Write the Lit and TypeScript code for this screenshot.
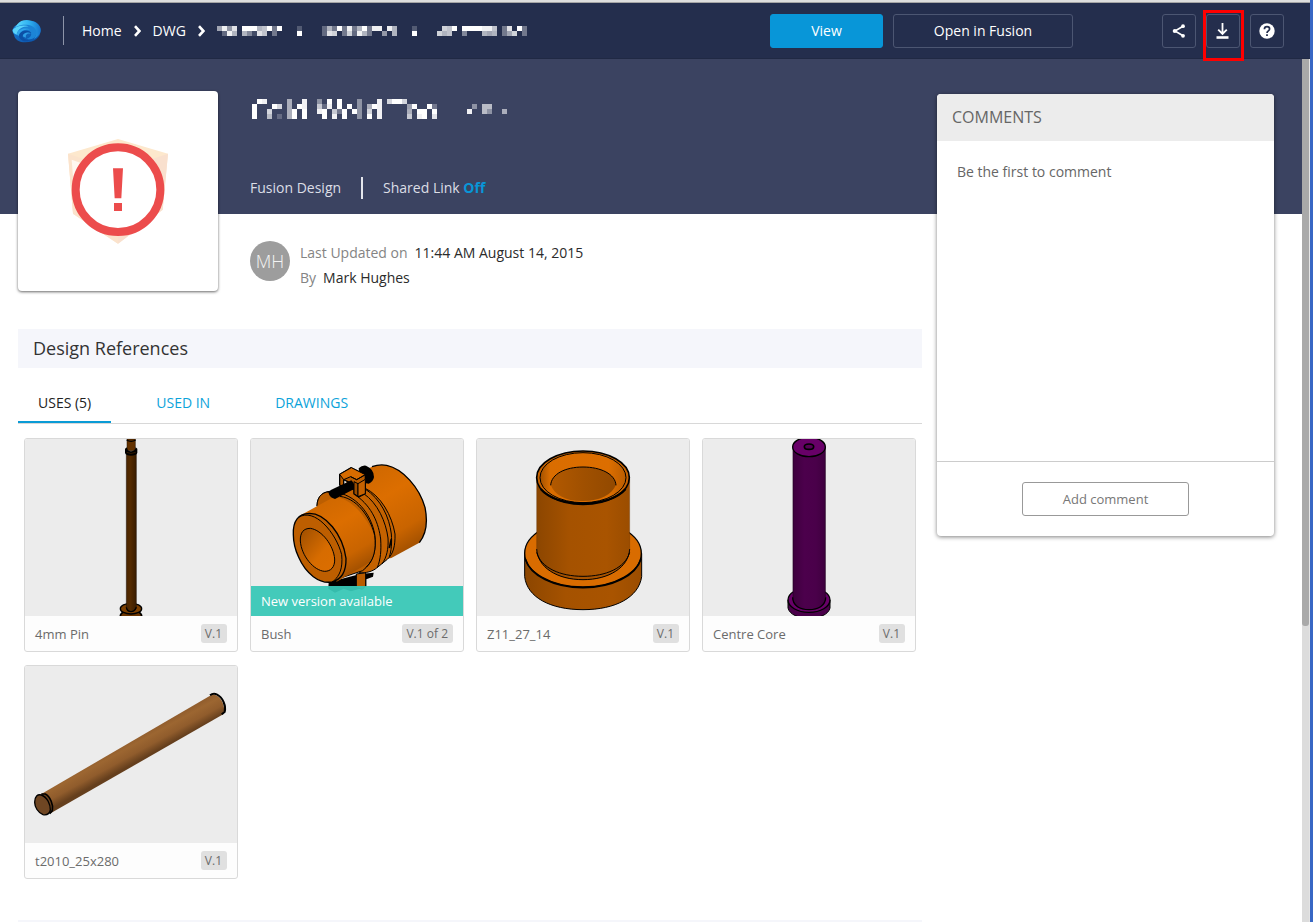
import { LitElement, html, svg, css } from "lit";
import { customElement, property, state } from "lit/decorators.js";

// Grey level per 5px cell, one hex digit each; a dot leaves the cell empty.
const CRUMB_CELLS = [
  "9e8d.fffabf6f...4....5a6f6e6af6ee.ea...4.....cbf.ffffeeb.6d.f6",
  ".5ea.a73db.6....f....5dc.6c5ea6..8.a...f....cab..7...a9a.69c.6",
];
const TITLE_CELLS = [
  ".fe....9..e..7.f.f...7...e.cffc",
  "f...fc.9.fe..b4e.f.f.7.9fe.....8f..f5.......7.aa",
  "f..c...9f.f..ef.b5f.f7.c.e.....9.ff.f......e..a7..9",
  "f..a.4.9f.f...f.e.f..7.f.e.....b.ef.d",
];

@customElement("masked-name")
export class MaskedName extends LitElement {
  @property({ attribute: false }) rows: string[] = [];

  static styles = css`
    :host { display: block; }
    svg { display: block; }
  `;

  render() {
    const cols = Math.max(0, ...this.rows.map((r) => r.length));
    const w = cols * 5;
    const h = this.rows.length * 5;
    return html`<svg width=${w} height=${h} viewBox="0 0 ${w} ${h}" shape-rendering="crispEdges" aria-hidden="true">
      ${this.rows.map((row, y) =>
        [...row].map((c, x) =>
          c === "." ? null : svg`<rect x=${x * 5} y=${y * 5} width="5" height="5" fill="#fff" fill-opacity=${(parseInt(c, 16) - 1) / 14}></rect>`
        )
      )}
    </svg>`;
  }
}

const pinArt = svg`<svg viewBox="15 27 636 531" aria-hidden="true">
  <defs><linearGradient id="pin"><stop offset="0" stop-color="#4a2500"/><stop offset=".4" stop-color="#552b00"/><stop offset="1" stop-color="#3a1d00"/></linearGradient></defs>
  <ellipse cx="333" cy="558" rx="32" ry="17" fill="#6b3500" stroke="#000" stroke-width="5"/>
  <ellipse cx="333" cy="536" rx="32" ry="16" fill="#7c3f00" stroke="#000" stroke-width="4"/>
  <path d="M319 68h30v466q-3 11-16 11t-14-11z" fill="url(#pin)" stroke="#1a0c00" stroke-width="1.5"/>
  <path d="M319 532q3 13 14 13t16-13" fill="none" stroke="#000" stroke-width="4"/>
  <path d="M321 27h25v35h-25z" fill="#643200" stroke="#201000" stroke-width="1.5"/>
  <path d="M320 30q13 8 27 0" fill="none" stroke="#000" stroke-width="4"/>
  <path d="M315 56l6-4q0 12 12 12t14-12l5 4v13q-4 8-19 8t-18-8z"/>
  <path d="M320 67q12 7 27 0" fill="none" stroke="#4a2500" stroke-width="2"/>
</svg>`;

const bushArt = svg`<svg viewBox="15 15 636 531" aria-hidden="true">
  <defs>
    <linearGradient id="b1" x1="0" y1="0" x2=".5" y2="1"><stop offset="0" stop-color="#c96500"/><stop offset=".45" stop-color="#dc6e00"/><stop offset=".8" stop-color="#c96400"/><stop offset="1" stop-color="#a25000"/></linearGradient>
    <linearGradient id="b2" x1="0" y1="0" x2="1" y2="1"><stop offset="0" stop-color="#9d4e00"/><stop offset=".6" stop-color="#d76c00"/><stop offset="1" stop-color="#dc6e00"/></linearGradient>
  </defs>
  <path d="M248 445l95-25 40-4-2 12-20 8v22l-46 14-22-8-26 12-20-12z"/>
  <path d="M331 420l28-4v40l-10 10-18-5z" fill="#b95c00" stroke="#000" stroke-width="3"/>
  <path d="M300 135L378 98Q400 90 422 94C470 104 520 160 537 220C545 260 541 300 520 326L436 372L330 390z" fill="url(#b1)"/>
  <path d="M378 98Q400 90 422 94C470 104 520 160 537 220C545 260 541 300 520 326" fill="none" stroke="#000" stroke-width="4"/>
  <path d="M213 215C214 185 232 170 262 172L356 162C405 185 438 245 447 300C448 335 442 360 424 376L392 402C380 412 360 418 340 416z" fill="#c46200" stroke="#000" stroke-width="3"/>
  <path d="M356 164C405 195 430 250 436 300C438 330 436 350 430 368M352 178C396 208 420 265 426 312C428 345 422 370 408 390M330 184C380 220 398 270 404 315C406 350 404 375 394 401" fill="none" stroke="#000" stroke-width="3"/>
  <path d="M436 315L430 342" stroke="#000" stroke-width="5"/>
  <path d="M213 215C214 185 232 170 262 174C330 180 375 240 386 300C393 345 382 385 350 410L290 430z" fill="#bc5e00" stroke="#000" stroke-width="3"/>
  <path d="M165 243L262 190C325 190 367 265 386 305C391 345 384 380 362 391L272 443z" fill="url(#b1)"/>
  <path d="M282 187C342 195 378 265 386 305C391 345 384 380 360 400" fill="none" stroke="#000" stroke-width="3"/>
  <path d="M142 302C140 260 158 239 190 238C238 238 290 300 300 373C301 415 285 437 258 444C220 450 180 420 158 370Q142 335 142 302z" fill="#bd5e00" stroke="#000" stroke-width="4"/>
  <path d="M158 250C205 220 270 295 287 362C291 405 280 425 264 440" fill="none" stroke="#000" stroke-width="3"/>
  <path d="M163 321C162 295 173 283 193 283C228 288 263 335 266 375C267 400 254 412 236 412C203 410 166 365 163 321z" fill="url(#b2)" stroke="#000" stroke-width="3"/>
  <path d="M338 103q10-10 22-8 24 10 24 34-2 14-16 20l-24-4z"/>
  <path d="M281 121v32l12 6v-22l31 15v28l14 9 20-10v-57l-43-21z" fill="#b65b00" stroke="#000" stroke-width="4"/>
  <path d="M281 121l35-20 42 21-26 15-18-9-21 9z" fill="#d66b00" stroke="#000" stroke-width="3"/>
  <path d="M247 174l9-7 60-28q9 8 10 25l-59 31q-17-4-20-21z"/>
  <path d="M324 143l12 6v38l-12-8z" fill="#9a4d00" stroke="#000" stroke-width="3"/>
  <path d="M336 149l22-13v43l-22 9z" fill="#c56200" stroke="#000" stroke-width="3"/>
  <path d="M314 128l18 9 26-15" fill="none" stroke="#000" stroke-width="3"/>
</svg>`;

const sleeveArt = svg`<svg viewBox="15 15 636 531" aria-hidden="true">
  <defs>
    <linearGradient id="s1"><stop offset="0" stop-color="#8c4600"/><stop offset=".35" stop-color="#a55200"/><stop offset=".75" stop-color="#a95400"/><stop offset="1" stop-color="#9b4d00"/></linearGradient>
    <linearGradient id="s2"><stop offset="0" stop-color="#a25100"/><stop offset=".12" stop-color="#da6d00"/><stop offset=".8" stop-color="#dc6e00"/><stop offset="1" stop-color="#bb5d00"/></linearGradient>
    <linearGradient id="s3"><stop offset="0" stop-color="#b25900"/><stop offset=".5" stop-color="#a05000"/><stop offset="1" stop-color="#924900"/></linearGradient>
  </defs>
  <path d="M158 358V428C165 490 235 527 333 527S500 490 509 428V358z" fill="url(#s1)" stroke="#000" stroke-width="3"/>
  <ellipse cx="333" cy="358" rx="175" ry="101" fill="#d96c00" stroke="#000" stroke-width="4"/>
  <path d="M160 375C175 425 245 461 333 461S492 425 507 375" fill="none" stroke="#000" stroke-width="5"/>
  <path d="M194 132V350C197 400 255 437 333 437S470 400 473 350V132z" fill="url(#s1)"/>
  <path d="M194 345C197 400 255 437 333 437S470 400 473 345M194 355C207 402 265 427 333 427S460 402 473 355" fill="none" stroke="#000" stroke-width="3"/>
  <path d="M194 132V350M473 132V350" stroke="#5b2d00" stroke-width="1"/>
  <ellipse cx="333" cy="131" rx="139" ry="80" fill="#c76300" stroke="#000" stroke-width="5"/>
  <ellipse cx="333" cy="131" rx="129" ry="75" fill="url(#s2)" stroke="#000" stroke-width="3"/>
  <path d="M236 152C240 118 280 99 333 99S427 118 432 152C420 182 385 200 333 201S247 182 236 152z" fill="url(#s3)"/>
  <path d="M236 154C238 120 280 99 333 99S430 120 432 154" fill="none" stroke="#000" stroke-width="3"/>
  <path d="M206 165C230 193 278 208 333 208S437 193 461 165" fill="none" stroke="#000" stroke-width="6"/>
</svg>`;

const coreArt = svg`<svg viewBox="15 15 636 531" aria-hidden="true">
  <defs><linearGradient id="c1"><stop offset="0" stop-color="#3d003d"/><stop offset=".35" stop-color="#4c004c"/><stop offset=".7" stop-color="#4a004a"/><stop offset="1" stop-color="#3f003f"/></linearGradient></defs>
  <path d="M270 498V522C275 542 300 552 333 552S391 542 396 522V498z" fill="#4a004a" stroke="#000" stroke-width="3"/>
  <ellipse cx="333" cy="498" rx="63" ry="37" fill="#680068" stroke="#000" stroke-width="4"/>
  <path d="M285 40V500C287 518 307 527 333 527S380 518 382 500V40z" fill="url(#c1)"/>
  <path d="M284 490C284 516 307 527 333 527S383 516 383 490" fill="none" stroke="#000" stroke-width="4"/>
  <path d="M285 40V490M382 40V490" stroke="#210021" stroke-width="2"/>
  <ellipse cx="333" cy="39" rx="49" ry="29" fill="#680068" stroke="#000" stroke-width="4"/>
  <ellipse cx="333" cy="38" rx="14" ry="8" fill="#560056" stroke="#000" stroke-width="5"/>
</svg>`;

const rodArt = svg`<svg viewBox="21 18 636 531" aria-hidden="true">
  <defs><linearGradient id="r1" gradientUnits="userSpaceOnUse" x1="310" y1="250" x2="344" y2="312"><stop offset="0" stop-color="#8d5a2c"/><stop offset=".3" stop-color="#9c6631"/><stop offset=".65" stop-color="#905c2c"/><stop offset="1" stop-color="#653f1d"/></linearGradient></defs>
  <path d="M70 402L580 105C605 100 624 135 617 162L98 460z" fill="url(#r1)"/>
  <path d="M576 106Q585 99 596 103C615 112 625 138 620 156L611 163" fill="none" stroke="#000" stroke-width="6"/>
  <path d="M70 402L82 402C97 410 107 435 103 452L95 461" fill="#6d441f" stroke="#000" stroke-width="5"/>
  <path d="M50 427C50 409 59 402 70 405C87 411 98 433 97 450C94 463 86 466 75 464C60 458 50 441 50 427z" fill="#6f4623" stroke="#000" stroke-width="4"/>
</svg>`;

interface Part { name: string; version: string; art: unknown; note?: string; }

const PARTS: Part[] = [
  { name: "4mm Pin", version: "V.1", art: pinArt },
  { name: "Bush", version: "V.1 of 2", art: bushArt, note: "New version available" },
  { name: "Z11_27_14", version: "V.1", art: sleeveArt },
  { name: "Centre Core", version: "V.1", art: coreArt },
  { name: "t2010_25x280", version: "V.1", art: rodArt },
];

@customElement("part-card")
export class PartCard extends LitElement {
  @property({ attribute: false }) part!: Part;

  static styles = css`
    :host { display: block; }
    .card { display: block; border: 1px solid #d9d9d9; border-radius: 3px; overflow: hidden; background: #fdfdfd; color: #6b6b6b; text-decoration: none; font-size: 13px; line-height: 18px; }
    .art { position: relative; background: #ececec; }
    .art svg { display: block; width: 100%; }
    .note { position: absolute; left: 0; right: 0; bottom: 0; padding: 6px 10px; background: rgba(56, 200, 183, 0.94); color: #fff; font-weight: 500; }
    .foot { display: flex; align-items: center; justify-content: space-between; height: 35px; padding: 0 10px; }
    .version { padding: 0 5px 0 4px; border-radius: 3px; background: #e0e0e0; font-size: 12px; line-height: 19px; }
  `;

  render() {
    const p = this.part;
    return html`<a class="card" href="#">
      <div class="art">${p.art}${p.note ? html`<div class="note">${p.note}</div>` : null}</div>
      <div class="foot"><span>${p.name}</span><span class="version">${p.version}</span></div>
    </a>`;
  }
}

const chevron = html`<svg class="chevron" width="7" height="12" viewBox="0 0 7 12" aria-hidden="true"><path d="M1 1.2L5.4 6L1 10.8" fill="none" stroke="#fff" stroke-width="2.6"/></svg>`;

@customElement("app-root")
export class AppRoot extends LitElement {
  @state() private tab = 0;

  static styles = css`
    :host { display: block; font-family: "Open Sans", "Noto Sans", sans-serif; font-size: 14px; line-height: 20px; color: #333; }
    * { box-sizing: border-box; }
    a { color: inherit; text-decoration: none; }
    button { font: inherit; margin: 0; cursor: pointer; }
    h1, h2, p { margin: 0; font-weight: 400; }
    .window { display: flex; flex-direction: column; height: 100vh; overflow: hidden; border-right: 3px solid #3867c4; background: #fff; }
    .edge { flex: none; height: 3px; background: #dedede; border-bottom: 1px solid #a5a5a5; }
    .bar { flex: none; display: flex; align-items: center; height: 56px; padding: 0 26px 0 12px; background: #242e4d; color: #fff; border-bottom: 1px solid #202944; }
    .logo { display: block; flex: none; }
    .rule { width: 1px; height: 29px; margin: 0 18px 0 22px; background: #8d94a8; }
    .crumbs { display: flex; align-items: center; gap: 12px; }
    .chevron { display: block; }
    .actions { display: flex; gap: 10px; margin-left: auto; }
    .btn { height: 34px; padding: 0; border: 1px solid #4c5672; border-radius: 3px; background: transparent; color: #fff; }
    .view { width: 113px; border-color: #0896d8; background: #0896d8; font-weight: 500; }
    .open { width: 180px; }
    .tools { display: flex; gap: 10px; margin-left: 89px; }
    .tool { display: grid; place-items: center; width: 34px; }
    .tool svg { display: block; }
    .marked { position: relative; }
    .marked::after { content: ""; position: absolute; inset: -5px -5px -14px -4px; border: 3px solid #f00; }
    .body { flex: 1; min-height: 0; display: flex; }
    .page { flex: 1; min-width: 0; overflow: hidden; display: grid; grid-template-columns: minmax(0, 1fr) 337px; align-items: start; gap: 15px; padding: 32px 28px 0 18px; background: linear-gradient(#3b4361, #3b4361) 0 0 / 100% 155px no-repeat #fff; }
    .scroll { width: 8px; background: #dcdcdc; border-right: 1px solid #e4e4e4; }
    .thumb { height: 65.7%; background: #a9a9a9; border-radius: 0 0 3px 3px; }
    .intro { display: flex; gap: 32px; }
    .preview { flex: none; width: 200px; height: 200px; border-radius: 4px; background: #fff; box-shadow: 0 1px 3px rgba(0, 0, 0, 0.6); }
    .preview svg { display: block; }
    .title { padding: 8px 0 0 2px; height: 86px; }
    .facts { display: flex; align-items: center; gap: 20px; height: 22px; color: #dcdee6; }
    .split { width: 2px; height: 22px; background: #e4e6ec; }
    .off { color: #0896d8; font-weight: 700; }
    .updated { display: flex; gap: 10px; margin-top: 41px; line-height: 25px; color: #848484; font-weight: 300; }
    .updated b { margin-left: 7px; font-weight: 400; color: #2b2b2b; }
    .avatar { display: grid; place-items: center; width: 40px; height: 40px; margin-top: 1px; border-radius: 50%; background: #9d9d9d; color: #f4f4f4; font-size: 18px; font-weight: 300; }
    .band { margin-top: 38px; padding: 0 15px; background: #f5f6fb; font-size: 18px; line-height: 39px; }
    .tabs { display: flex; gap: 25px; padding-top: 15px; border-bottom: 1px solid #d8d8d8; }
    .tab { height: 40px; padding: 2px 20px 0; border: 0; border-bottom: 2px solid transparent; background: none; color: #0ca3da; }
    .tab[aria-selected="true"] { color: #222; border-bottom-color: #0a9bd6; }
    .cards { display: grid; grid-template-columns: repeat(auto-fill, 214px); gap: 13px 12px; padding: 14px 6px 0; }
    .next { margin-top: 41px; }
    .comments { display: flex; flex-direction: column; margin-top: 3px; border-radius: 4px; overflow: hidden; background: #fff; box-shadow: 0 1px 4px rgba(0, 0, 0, 0.5); color: #666; }
    .comments h2 { padding: 0 15px; background: #ececec; font-size: 16px; line-height: 47px; }
    .thread { min-height: 320px; padding: 21px 20px; }
    .compose { display: grid; place-items: center; padding: 20px; border-top: 1px solid #ccc; }
    .add { width: 167px; height: 34px; border: 1px solid #999; border-radius: 3px; background: #fff; color: #777; font-size: 13px; }
  `;

  render() {
    return html`<div class="window">
      <div class="edge"></div>
      <header class="bar">
        <svg class="logo" width="29" height="24" viewBox="36 56 87 72" aria-hidden="true">
          <defs>
            <linearGradient id="l1" x1="0" y1="0" x2="1" y2="0"><stop offset="0" stop-color="#5fdcff"/><stop offset=".55" stop-color="#2fb0f0"/><stop offset="1" stop-color="#1674cc"/></linearGradient>
            <linearGradient id="l2" x1="0" y1="0" x2="1" y2="1"><stop offset="0" stop-color="#1b80d8"/><stop offset="1" stop-color="#0a4ea4"/></linearGradient>
          </defs>
          <path d="M50 74C38 80 34 92 42 103C44 118 58 126 76 126C104 126 122 112 122 90C122 76 112 66 98 62z" fill="url(#l2)"/>
          <path d="M52 72C60 60 78 56 94 61C114 66 124 80 122 93C120 103 112 112 102 116C112 102 108 84 92 79C76 74 58 82 46 80z" fill="url(#l1)"/>
          <path d="M38 90C46 74 70 72 86 74C104 77 114 92 108 104C104 116 90 120 80 115C92 112 98 101 90 94C80 86 60 90 57 106C44 104 38 98 38 90z" fill="#1c84d6"/>
          <path d="M38 88C50 76 72 73 86 78C66 78 52 88 50 103C42 100 37 94 38 88z" fill="#58d2fa"/>
          <path d="M50 103C52 86 74 80 92 88C74 86 60 92 57 106z" fill="#2fa4ea"/>
          <path d="M57 106C60 90 84 86 94 98C84 94 70 98 68 108C70 116 80 121 92 119C76 127 58 121 57 106z" fill="#0c4fa5"/>
          <path d="M68 108C70 96 86 94 93 100C80 98 76 104 78 112z" fill="#2f9fe6"/>
        </svg>
        <div class="rule"></div>
        <nav class="crumbs" aria-label="Breadcrumb">
          <a href="#">Home</a>${chevron}<a href="#">DWG</a>${chevron}
          <masked-name .rows=${CRUMB_CELLS}></masked-name>
        </nav>
        <div class="actions">
          <button class="btn view">View</button>
          <button class="btn open">Open in Fusion</button>
        </div>
        <div class="tools">
          <button class="btn tool" aria-label="Share">
            <svg width="14" height="16" viewBox="0 0 14 16"><path d="M11 3.2L3 8L11 12.8" fill="none" stroke="#fff" stroke-width="1.6"/><g fill="#fff"><circle cx="11" cy="3.2" r="1.9"/><circle cx="2.8" cy="8" r="2.1"/><circle cx="11" cy="12.8" r="1.9"/></g></svg>
          </button>
          <button class="btn tool marked" aria-label="Download">
            <svg width="14" height="16" viewBox="0 0 14 16"><path d="M6.5 0V10.5M2.2 6.6L6.5 11L10.8 6.6" fill="none" stroke="#fff" stroke-width="1.8"/><path d="M.5 13.2h12v2.6H.5z" fill="#fff"/></svg>
          </button>
          <button class="btn tool" aria-label="Help">
            <svg width="16" height="16" viewBox="0 0 16 16"><circle cx="8" cy="8" r="7.7" fill="#fff"/><path d="M5.4 6.2C5.4 4.5 6.5 3.6 8 3.6S10.6 4.6 10.6 6C10.6 7.9 8 7.9 8 10" fill="none" stroke="#242e4d" stroke-width="1.7"/><path d="M7.1 11.2h1.8V13H7.1z" fill="#242e4d"/></svg>
          </button>
        </div>
      </header>
      <div class="body">
        <div class="page">
          <main>
            <section class="intro">
              <div class="preview">
                <svg width="200" height="200" viewBox="24 18 600 600" aria-hidden="true">
                  <path d="M324 162L474 206L458 374L324 476L189 386L174 206z" fill="#fde8cd"/>
                  <path d="M174 206L324 256V476L189 386z" fill="#fbe3cc"/>
                  <path d="M474 206L324 256V476L458 374z" fill="#f9e0ce"/>
                  <path d="M185 224L240 244V380L195 350z" fill="#fff8f0"/>
                  <circle cx="324" cy="314" r="127" fill="#fff" stroke="#ec4c4c" stroke-width="24"/>
                  <path d="M309 250h30l-5 90h-20zM312 354h24v24h-24z" fill="#ec4c4c"/>
                </svg>
              </div>
              <div>
                <h1 class="title"><masked-name .rows=${TITLE_CELLS}></masked-name></h1>
                <div class="facts">
                  <span>Fusion Design</span><i class="split"></i>
                  <span>Shared Link <a class="off" href="#">Off</a></span>
                </div>
                <div class="updated">
                  <div class="avatar">MH</div>
                  <div><p>Last Updated on<b>11:44 AM August 14, 2015</b></p><p>By<b>Mark Hughes</b></p></div>
                </div>
              </div>
            </section>
            <h2 class="band">Design References</h2>
            <div class="tabs" role="tablist">
              ${["USES (5)", "USED IN", "DRAWINGS"].map(
                (t, i) => html`<button class="tab" role="tab" aria-selected=${this.tab === i} @click=${() => (this.tab = i)}>${t}</button>`
              )}
            </div>
            <div class="cards">${PARTS.map((p) => html`<part-card .part=${p}></part-card>`)}</div>
            <div class="band next">&nbsp;</div>
          </main>
          <aside class="comments">
            <h2>COMMENTS</h2>
            <div class="thread">Be the first to comment</div>
            <div class="compose"><button class="add">Add comment</button></div>
          </aside>
        </div>
        <div class="scroll"><div class="thumb"></div></div>
      </div>
    </div>`;
  }
}
